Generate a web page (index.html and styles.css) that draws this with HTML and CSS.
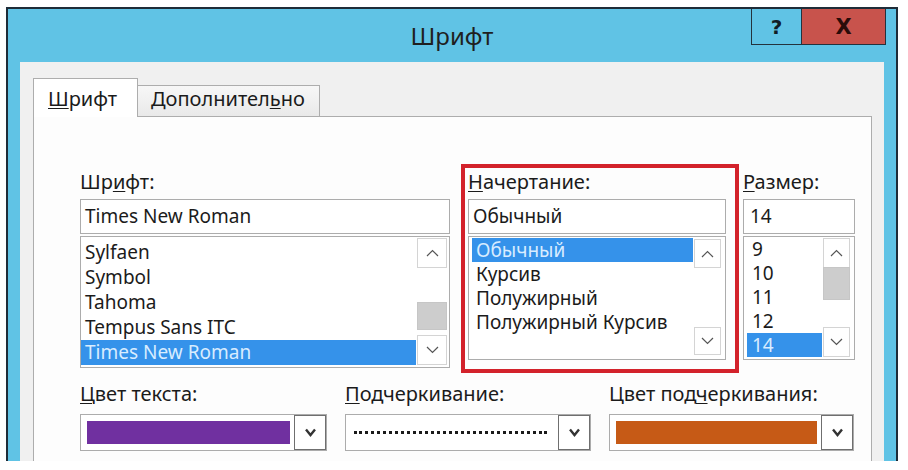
FILE: index.html
```html
<!DOCTYPE html>
<html lang="ru">
<head>
<meta charset="utf-8">
<title>Шрифт</title>
<link rel="stylesheet" href="styles.css">
</head>
<body>
<div class="window">
  <div class="titlebar">
    <div class="title">Шрифт</div>
    <div class="caption">
      <div class="cbtn help">?</div>
      <div class="cbtn close">X</div>
    </div>
  </div>
  <div class="body">
    <div class="tabs">
      <div class="tab active"><u>Ш</u>рифт</div>
      <div class="tab inactive">Дополнител<u>ь</u>но</div>
    </div>
    <div class="panel">
      <div class="row1">
        <div class="col col-font">
          <div class="label">Шр<u>и</u>фт:</div>
          <div class="input">Times New Roman</div>
          <div class="list list-font">
            <div class="items">
              <div class="item">Sylfaen</div>
              <div class="item">Symbol</div>
              <div class="item">Tahoma</div>
              <div class="item">Tempus Sans ITC</div>
              <div class="item sel">Times New Roman</div>
            </div>
            <div class="sbar">
              <div class="sbtn up"><svg width="13" height="8" viewBox="0 0 13 8"><polyline points="1,7 6.5,1.5 12,7" fill="none" stroke="#555" stroke-width="1.2"/></svg></div>
              <div class="track"><div class="thumb"></div></div>
              <div class="sbtn down"><svg width="13" height="8" viewBox="0 0 13 8"><polyline points="1,1 6.5,6.5 12,1" fill="none" stroke="#555" stroke-width="1.2"/></svg></div>
            </div>
          </div>
        </div>
        <div class="col col-style">
          <div class="label"><u>Н</u>ачертание:</div>
          <div class="input">Обычный</div>
          <div class="list list-style">
            <div class="items">
              <div class="item sel">Обычный</div>
              <div class="item">Курсив</div>
              <div class="item">Полужирный</div>
              <div class="item">Полужирный Курсив</div>
            </div>
            <div class="sbar">
              <div class="sbtn up"><svg width="13" height="8" viewBox="0 0 13 8"><polyline points="1,7 6.5,1.5 12,7" fill="none" stroke="#555" stroke-width="1.2"/></svg></div>
              <div class="track"></div>
              <div class="sbtn down"><svg width="13" height="8" viewBox="0 0 13 8"><polyline points="1,1 6.5,6.5 12,1" fill="none" stroke="#555" stroke-width="1.2"/></svg></div>
            </div>
          </div>
          <div class="redbox"></div>
        </div>
        <div class="col col-size">
          <div class="label"><u>Р</u>азмер:</div>
          <div class="input">14</div>
          <div class="list list-size">
            <div class="items">
              <div class="item">9</div>
              <div class="item">10</div>
              <div class="item">11</div>
              <div class="item">12</div>
              <div class="item sel">14</div>
            </div>
            <div class="sbar">
              <div class="sbtn up"><svg width="13" height="8" viewBox="0 0 13 8"><polyline points="1,7 6.5,1.5 12,7" fill="none" stroke="#555" stroke-width="1.2"/></svg></div>
              <div class="track"><div class="thumb"></div></div>
              <div class="sbtn down"><svg width="13" height="8" viewBox="0 0 13 8"><polyline points="1,1 6.5,6.5 12,1" fill="none" stroke="#555" stroke-width="1.2"/></svg></div>
            </div>
          </div>
        </div>
      </div>
      <div class="row2">
        <div class="field">
          <div class="label"><u>Ц</u>вет текста:</div>
          <div class="combo">
            <div class="cval"><div class="swatch purple"></div></div>
            <div class="dbtn"><svg width="11" height="9" viewBox="0 0 11 9"><polyline points="1,1.5 5.5,7 10,1.5" fill="none" stroke="#333" stroke-width="2.4"/></svg></div>
          </div>
        </div>
        <div class="field">
          <div class="label"><u>П</u>одчеркивание:</div>
          <div class="combo">
            <div class="cval dotted"><div class="dots"></div></div>
            <div class="dbtn"><svg width="11" height="9" viewBox="0 0 11 9"><polyline points="1,1.5 5.5,7 10,1.5" fill="none" stroke="#333" stroke-width="2.4"/></svg></div>
          </div>
        </div>
        <div class="field">
          <div class="label">Цвет под<u>ч</u>еркивания:</div>
          <div class="combo">
            <div class="cval"><div class="swatch orange"></div></div>
            <div class="dbtn"><svg width="11" height="9" viewBox="0 0 11 9"><polyline points="1,1.5 5.5,7 10,1.5" fill="none" stroke="#333" stroke-width="2.4"/></svg></div>
          </div>
        </div>
      </div>
    </div>
  </div>
</div>
</body>
</html>
```
FILE: styles.css
```css
html, body {
  margin: 0;
  background: #ffffff;
}
body {
  width: 908px;
  height: 470px;
  overflow: hidden;
  font-family: "Noto Sans", "Open Sans", sans-serif;
  color: #1b1b1b;
}
u {
  text-decoration-thickness: 1px;
  text-underline-offset: 2px;
}
.window {
  margin: 7px 0 0 6px;
  width: 892px;
  height: 454px;
  box-sizing: border-box;
  border: 2px solid #1e2c38;
  border-bottom: none;
  background: #60c3e5;
  display: flex;
  flex-direction: column;
  overflow: hidden;
}
.titlebar {
  flex: none;
  height: 53px;
  display: grid;
  grid-template-columns: 1fr auto 1fr;
}
.title {
  grid-column: 2;
  align-self: center;
  font-size: 24px;
  line-height: 30px;
  margin-top: 1px;
  color: #1f1f1f;
}
.caption {
  grid-column: 3;
  justify-self: end;
  align-self: start;
  display: flex;
  margin-right: 10px;
}
.cbtn {
  height: 36px;
  box-sizing: border-box;
  border: 1px solid #24323d;
  border-top: none;
  display: flex;
  align-items: center;
  justify-content: center;
  font-weight: 700;
  font-family: "DejaVu Sans", sans-serif;
}
.help {
  width: 51px;
  font-size: 20px;
  color: #111c26;
}
.close {
  width: 84px;
  border-left: none;
  background: #c8534c;
  font-size: 21px;
  color: #2a0c0a;
}
.body {
  flex: 1;
  margin: 0 12px;
  background: #f0f0f0;
  padding: 16px 12px 0 13px;
  display: flex;
  flex-direction: column;
}
.tabs {
  display: flex;
  align-items: flex-end;
}
.tab {
  font-size: 20px;
  line-height: 22px;
  box-sizing: border-box;
  border: 1px solid #adadad;
  border-bottom: none;
  white-space: nowrap;
}
.tab.active {
  width: 105px;
  height: 39px;
  padding: 9px 0 0 14px;
  background: #ffffff;
  margin-bottom: -1px;
  position: relative;
  z-index: 1;
}
.tab.inactive {
  width: 182px;
  height: 31px;
  padding: 2px 0 0 13px;
  border-left: none;
  background: linear-gradient(#f7f7f7, #e9e9e9);
}
.panel {
  flex: 1;
  background: #fdfdfd;
  border: 1px solid #adadad;
  border-bottom: none;
  padding: 54px 0 0 46px;
}
.row1 {
  display: flex;
  align-items: flex-start;
}
.col-font { width: 370px; }
.col-style { width: 258px; margin-left: 18px; position: relative; }
.col-size { width: 112px; margin-left: 17px; }
.label {
  font-size: 20px;
  line-height: 22px;
  white-space: nowrap;
}
.input {
  margin-top: 6px;
  height: 35px;
  box-sizing: border-box;
  border: 1px solid #acacac;
  background: #ffffff;
  font-size: 19px;
  line-height: 33px;
  padding-left: 4px;
}
.col-size .input { padding-left: 6px; }
.list {
  margin-top: 2px;
  box-sizing: border-box;
  border: 1px solid #acacac;
  background: #ffffff;
  display: flex;
  overflow: hidden;
}
.items { flex: 1; min-width: 0; }
.item {
  font-size: 19px;
  padding-left: 4px;
  white-space: nowrap;
  height: 24px;
  line-height: 24px;
}
.item.sel {
  background: #3592ea;
  color: #d8ecff;
}
.sbar {
  display: flex;
  flex-direction: column;
  flex: none;
}
.sbtn {
  flex: none;
  box-sizing: border-box;
  border: 1px solid #d4d4d4;
  background: #ffffff;
  display: flex;
  align-items: center;
  justify-content: center;
}
.track { flex: 1; }
.thumb {
  background: #cdcdcd;
  border: 1px solid #c6c6c6;
  box-sizing: border-box;
}

/* font list */
.list-font { height: 132px; }
.list-font .items { padding-top: 3px; }
.list-font .item { height: 25px; line-height: 25px; }
.list-font .sbar { width: 30px; height: 127px; margin: 1px 2px 0 1px; }
.list-font .sbtn { height: 30px; }
.list-font .track { padding-top: 34px; }
.list-font .thumb { height: 28px; }

/* style list */
.list-style { height: 124px; }
.list-style .items { padding: 1px 0 0 3px; }
.list-style .sbar { width: 27px; height: 116px; margin: 2px 4px 0 1px; }
.list-style .sbtn.up { height: 29px; }
.list-style .sbtn.down { height: 28px; }

/* size list */
.list-size { height: 124px; }
.list-size .items { padding-left: 3px; }
.list-size .item { padding-left: 5px; }
.list-size .sbar { width: 27px; height: 119px; margin: 1px 4px 0 1px; }
.list-size .sbtn { height: 30px; }
.list-size .thumb { height: 33px; margin-top: -1px; }

.redbox {
  position: absolute;
  left: -7px;
  top: -7px;
  right: -13px;
  bottom: -13px;
  border: 4px solid #d3222b;
  pointer-events: none;
}

.row2 {
  margin-top: 15px;
  display: grid;
  grid-template-columns: 247px 246px 245px;
  column-gap: 18px;
}
.combo {
  margin-top: 9px;
  height: 37px;
  box-sizing: border-box;
  border: 1px solid #acacac;
  background: #ffffff;
  display: flex;
}
.cval {
  flex: 1;
  padding: 6px 4px 6px 6px;
  display: flex;
}
.swatch { flex: 1; }
.purple { background: #7030a0; }
.orange { background: #c65a16; }
.cval.dotted {
  padding: 0 11px 0 8px;
  align-items: center;
}
.dots {
  flex: 1;
  height: 0;
  border-top: 3px dotted #1a1a1a;
}
.dbtn {
  width: 32px;
  flex: none;
  box-sizing: border-box;
  border: 1px solid #6f6f6f;
  display: flex;
  align-items: center;
  justify-content: center;
}
```
